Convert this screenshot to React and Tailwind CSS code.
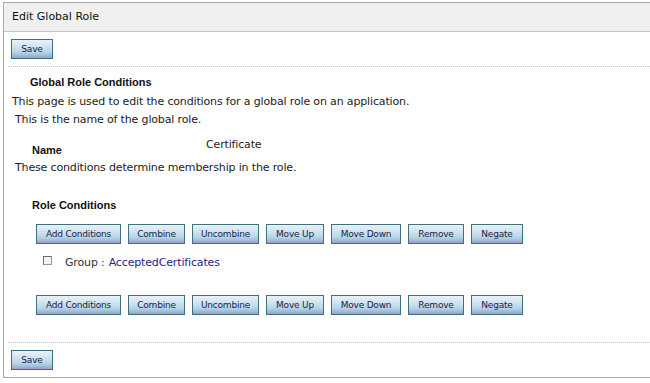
const btn =
  "h-[20px] border border-[#40707e] bg-[linear-gradient(#e9f1f8_0%,#d2e4f0_35%,#b4d6e6_68%,#a4bcd8_85%,#9c9cc8_100%)] text-[9px] tracking-[-0.2px] text-[#1a2148] leading-[18px] px-0 shrink-0";

function Btn({ label, w }) {
  return (
    <button className={btn} style={{ width: w }}>
      {label}
    </button>
  );
}

function ButtonRow() {
  return (
    <div className="flex gap-[7px] ml-[32px]">
      <Btn label="Add Conditions" w={85} />
      <Btn label="Combine" w={57} />
      <Btn label="Uncombine" w={67} />
      <Btn label="Move Up" w={58} />
      <Btn label="Move Down" w={70} />
      <Btn label="Remove" w={56} />
      <Btn label="Negate" w={52} />
    </div>
  );
}

const bold = "font-bold text-[#111] font-['Liberation_Sans',Arial,sans-serif] tracking-normal";

export default function App() {
  return (
    <div className="w-[650px] h-[383px] bg-white overflow-hidden pt-[2px] pl-[3px] text-[#222] font-['DejaVu_Sans',Tahoma,sans-serif]">
      <div className="w-[680px] h-[376px] border border-[#a8a8a8] flex flex-col">
        <div className="h-[29px] bg-[#f0f0f0] border-b border-[#c4c4c4] pl-[8px] flex items-center text-[11px] text-[#111]">
          Edit Global Role
        </div>

        <div className="flex pl-[7px] pt-[7px]">
          <Btn label="Save" w={42} />
        </div>
        <div className="ml-[4px] mt-[7px] border-t border-dotted border-[#c4c4c4]" />

        <div className="text-[11px] tracking-[-0.15px]">
          <div className={"mt-[8px] ml-[26px] h-[14px] leading-[14px] " + bold}>
            Global Role Conditions
          </div>
          <div className="mt-[6px] ml-[8px] h-[14px] leading-[14px]">
            This page is used to edit the conditions for a global role on an application.
          </div>
          <div className="mt-[4px] ml-[11px] h-[14px] leading-[14px]">
            This is the name of the global role.
          </div>
          <div className="ml-[28px] h-[30px] flex">
            <div className={"w-[174px] pt-[16px] leading-[14px] " + bold}>Name</div>
            <div className="pt-[11px] leading-[14px]">Certificate</div>
          </div>
          <div className="mt-[4px] ml-[11px] h-[14px] leading-[14px]">
            These conditions determine membership in the role.
          </div>
          <div className={"mt-[23px] ml-[28px] h-[14px] leading-[14px] " + bold}>
            Role Conditions
          </div>
        </div>

        <div className="mt-[12px]">
          <ButtonRow />
        </div>

        <div className="mt-[12px] ml-[39px] h-[14px] flex items-center text-[11px] tracking-[-0.15px]">
          <span className="w-[9px] h-[9px] border border-[#9a9a9a] border-t-[#6e6e6e] border-l-[#6e6e6e] bg-[#f4f4f4] -mt-[6px]" />
          <span className="ml-[13px] text-[#333]">Group :</span>
          <span className="ml-[4px] text-[#24248e]">AcceptedCertificates</span>
        </div>

        <div className="mt-[25px]">
          <ButtonRow />
        </div>

        <div className="ml-[4px] mt-[27px] border-t border-dotted border-[#c4c4c4]" />
        <div className="flex pl-[7px] pt-[7px]">
          <Btn label="Save" w={42} />
        </div>
      </div>
    </div>
  );
}
